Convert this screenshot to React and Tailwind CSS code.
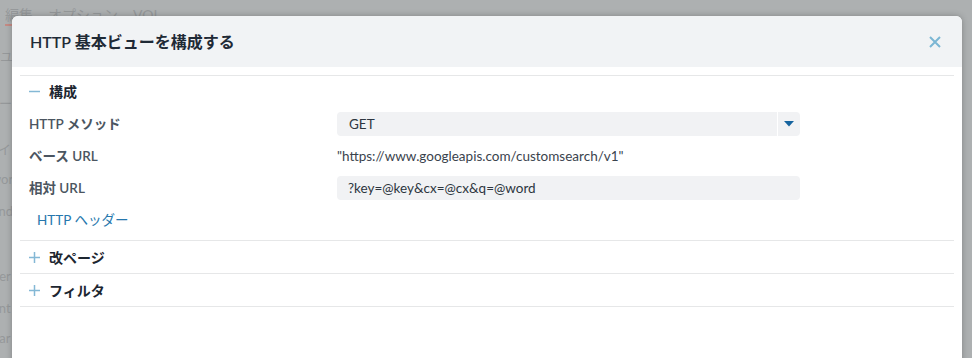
export default function App() {
  const bgRows = [
    { t: "ユーザー", mt: 21 },
    { t: "ー名", mt: 29, ml: -1 },
    { t: "イプ", mt: 28, ml: -2 },
    { t: "word", mt: 12, ml: -9 },
    { t: "and", mt: 14, ml: -8 },
    { t: "ner", mt: 47, ml: -8 },
    { t: "ent", mt: 14, ml: -8 },
    { t: "par", mt: 12, ml: -8 },
  ];
  return (
    <div className="relative h-[358px] w-[972px] overflow-hidden bg-[#adb0b1] font-['Lato','Noto_Sans_CJK_JP',sans-serif]">
      {/* background page under the overlay */}
      <div className="text-[#95989a]">
        <div className="flex items-start gap-[15px] pl-[5px] pt-[6px] text-[14px] leading-[18px]">
          <div className="flex flex-col">
            <span>編集</span>
            <span className="h-[2px] bg-[#c48a84]" />
          </div>
          <span>オプション</span>
          <span>VQL</span>
        </div>
        <div className="flex flex-col text-[13px] leading-[18px]">
          {bgRows.map((r, i) => (
            <span key={i} style={{ marginTop: r.mt, marginLeft: r.ml || 0 }}>
              {r.t}
            </span>
          ))}
        </div>
      </div>

      {/* modal */}
      <div className="absolute left-[12px] top-[16px] h-[360px] w-[950px] rounded-t-[6px] bg-white shadow-[0_0_6px_rgba(0,0,0,0.25)]">
        <div className="flex h-[51px] items-center justify-between rounded-t-[6px] bg-[#f1f3f5] pl-[18px] pr-[21px]">
          <span className="text-[16px] font-semibold text-[#1f2a36]">HTTP 基本ビューを構成する</span>
          <svg width="12" height="12" viewBox="0 0 12 12">
            <path d="M1 1L11 11M11 1L1 11" stroke="#7bb6d4" strokeWidth="2" />
          </svg>
        </div>
        <div className="px-[8px] pt-[8px]">
          {/* expanded section */}
          <div className="border-t border-[#e6e7e8]">
            <div className="flex h-[30px] items-center gap-[9px] pl-[9px]">
              <svg width="11" height="11" viewBox="0 0 11 11">
                <path d="M0 5.5H11" stroke="#84b8d5" strokeWidth="1.5" />
              </svg>
              <span className="text-[14px] font-bold text-[#1d2630]">構成</span>
            </div>
            <div className="flex flex-col gap-[8px] pb-[8px] pl-[9px] pt-[6px] text-[13.5px]">
              <div className="grid h-[24px] grid-cols-[308px_463px] items-center">
                <span className="font-semibold text-[#4b5560]">HTTP メソッド</span>
                <div className="flex h-[24px] items-center rounded-[4px] bg-[#f1f2f4]">
                  <span className="flex-1 pl-[12px] text-[#2d3640]">GET</span>
                  <div className="flex h-full w-[23px] items-center justify-center border-l border-white">
                    <svg width="10" height="6" viewBox="0 0 10 6">
                      <path d="M0 0H10L5 5.5Z" fill="#16649f" />
                    </svg>
                  </div>
                </div>
              </div>
              <div className="grid h-[24px] grid-cols-[308px_463px] items-center">
                <span className="font-semibold text-[#4b5560]">ベース URL</span>
                <span className="text-[#3a434d]">"https://www.googleapis.com/customsearch/v1"</span>
              </div>
              <div className="grid h-[24px] grid-cols-[308px_463px] items-center">
                <span className="font-semibold text-[#4b5560]">相対 URL</span>
                <div className="flex h-[24px] items-center rounded-[4px] bg-[#f1f2f4] pl-[11px] text-[#2d3640]">
                  ?key=@key&amp;cx=@cx&amp;q=@word
                </div>
              </div>
              <div className="flex h-[24px] items-center pl-[8px]">
                <span className="text-[#2677ad]">HTTP ヘッダー</span>
              </div>
            </div>
          </div>
          {/* collapsed sections */}
          {["改ページ", "フィルタ"].map((t, i) => (
            <div
              key={t}
              className={
                i === 1
                  ? "flex h-[34px] items-center gap-[9px] border-y border-[#e6e7e8] pl-[9px]"
                  : "flex h-[33px] items-center gap-[9px] border-t border-[#e6e7e8] pl-[9px]"
              }
            >
              <svg width="11" height="11" viewBox="0 0 11 11">
                <path d="M0 5.5H11M5.5 0V11" stroke="#84b8d5" strokeWidth="1.5" />
              </svg>
              <span className="text-[14px] font-bold text-[#1d2630]">{t}</span>
            </div>
          ))}
        </div>
      </div>
    </div>
  );
}
